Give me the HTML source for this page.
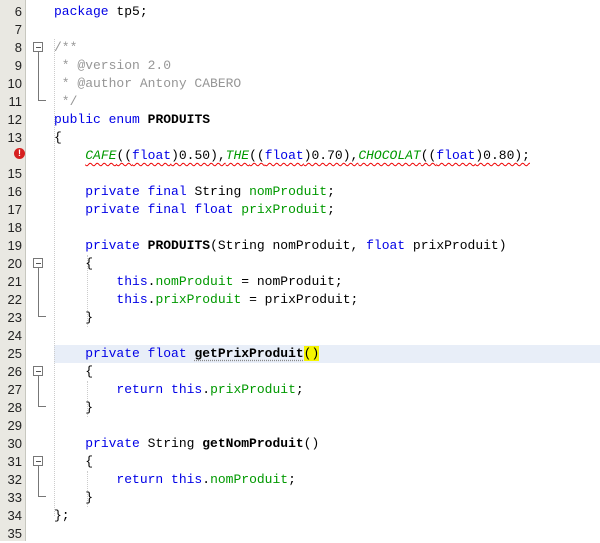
<!DOCTYPE html>
<html><head><meta charset="utf-8"><style>
*{margin:0;padding:0}
body{width:600px;height:541px;background:#fff;position:relative;overflow:hidden;font-family:"Liberation Mono",monospace;font-size:13px}
.g{position:absolute;left:0;top:0;width:25px;height:541px;background:#e9e8e2;border-right:1px solid #c8c8c0}
.n{position:absolute;left:0;width:22px;text-align:right;font-family:"Liberation Sans",sans-serif;font-size:13px;color:#222;height:18px;line-height:18px}
.l{position:absolute;left:54px;height:18px;line-height:18px;white-space:pre;color:#000}
.k{color:#0000e6}.f{color:#009900}.c{color:#969696}.i{color:#009900;font-style:italic}.b{font-weight:bold}
.sq{text-decoration:underline wavy #e00;text-decoration-thickness:1px;text-underline-offset:3px}
.dq{text-decoration:underline dotted #888;text-underline-offset:3px}
.fb{position:absolute;left:33px;width:8px;height:8px;border:1px solid #777;background:#fff}
.fb:after{content:"";position:absolute;left:2px;top:4px;width:5px;height:1px;background:#555}
.fl{position:absolute;left:38px;width:7px;border-left:1px solid #777;border-bottom:1px solid #777}
.guide{position:absolute;width:0;border-left:1px dotted #ccc}
</style></head><body>
<div class="g"></div>
<div style="position:absolute;left:54px;top:345px;width:546px;height:18px;background:#e8eef8"></div>
<div class="guide" style="left:54px;top:39px;height:477px"></div>
<div class="guide" style="left:87px;top:255px;height:72px"></div>
<div class="guide" style="left:87px;top:381px;height:36px"></div>
<div class="guide" style="left:87px;top:471px;height:36px"></div>
<div class="n" style="top:3px">6</div><div class="n" style="top:21px">7</div><div class="n" style="top:39px">8</div><div class="n" style="top:57px">9</div><div class="n" style="top:75px">10</div><div class="n" style="top:93px">11</div><div class="n" style="top:111px">12</div><div class="n" style="top:129px">13</div>
<div style="position:absolute;left:14px;top:148px;width:11px;height:11px;border-radius:50%;background:#d62020;color:#fff;font:bold 9px/11px 'Liberation Sans',sans-serif;text-align:center">!</div>
<div class="n" style="top:165px">15</div><div class="n" style="top:183px">16</div><div class="n" style="top:201px">17</div><div class="n" style="top:219px">18</div><div class="n" style="top:237px">19</div><div class="n" style="top:255px">20</div><div class="n" style="top:273px">21</div><div class="n" style="top:291px">22</div><div class="n" style="top:309px">23</div><div class="n" style="top:327px">24</div><div class="n" style="top:345px">25</div><div class="n" style="top:363px">26</div><div class="n" style="top:381px">27</div><div class="n" style="top:399px">28</div><div class="n" style="top:417px">29</div><div class="n" style="top:435px">30</div><div class="n" style="top:453px">31</div><div class="n" style="top:471px">32</div><div class="n" style="top:489px">33</div><div class="n" style="top:507px">34</div><div class="n" style="top:525px">35</div>
<div class="fl" style="top:52px;height:48px"></div><div class="fb" style="top:42px"></div>
<div class="fl" style="top:268px;height:48px"></div><div class="fb" style="top:258px"></div>
<div class="fl" style="top:376px;height:30px"></div><div class="fb" style="top:366px"></div>
<div class="fl" style="top:466px;height:30px"></div><div class="fb" style="top:456px"></div>
<div class="l" style="top:3px"><span class="k">package</span> tp5;</div>
<div class="l c" style="top:39px">/**</div>
<div class="l c" style="top:57px"> * @version 2.0</div>
<div class="l c" style="top:75px"> * @author Antony CABERO</div>
<div class="l c" style="top:93px"> */</div>
<div class="l" style="top:111px"><span class="k">public enum</span> <span class="b">PRODUITS</span></div>
<div class="l" style="top:129px">{</div>
<div class="l" style="top:147px">    <span class="sq"><span class="i">CAFE</span>((<span class="k">float</span>)0.50),<span class="i">THE</span>((<span class="k">float</span>)0.70),<span class="i">CHOCOLAT</span>((<span class="k">float</span>)0.80);</span></div>
<div class="l" style="top:183px">    <span class="k">private final</span> String <span class="f">nomProduit</span>;</div>
<div class="l" style="top:201px">    <span class="k">private final float</span> <span class="f">prixProduit</span>;</div>
<div class="l" style="top:237px">    <span class="k">private</span> <span class="b">PRODUITS</span>(String nomProduit, <span class="k">float</span> prixProduit)</div>
<div class="l" style="top:255px">    {</div>
<div class="l" style="top:273px">        <span class="k">this</span>.<span class="f">nomProduit</span> = nomProduit;</div>
<div class="l" style="top:291px">        <span class="k">this</span>.<span class="f">prixProduit</span> = prixProduit;</div>
<div class="l" style="top:309px">    }</div>
<div class="l" style="top:345px">    <span class="k">private float</span> <span class="b dq">getPrixProduit</span><span style="background:#f5f500">()</span></div>
<div class="l" style="top:363px">    {</div>
<div class="l" style="top:381px">        <span class="k">return this</span>.<span class="f">prixProduit</span>;</div>
<div class="l" style="top:399px">    }</div>
<div class="l" style="top:435px">    <span class="k">private</span> String <span class="b">getNomProduit</span>()</div>
<div class="l" style="top:453px">    {</div>
<div class="l" style="top:471px">        <span class="k">return this</span>.<span class="f">nomProduit</span>;</div>
<div class="l" style="top:489px">    }</div>
<div class="l" style="top:507px">};</div>
</body></html>
